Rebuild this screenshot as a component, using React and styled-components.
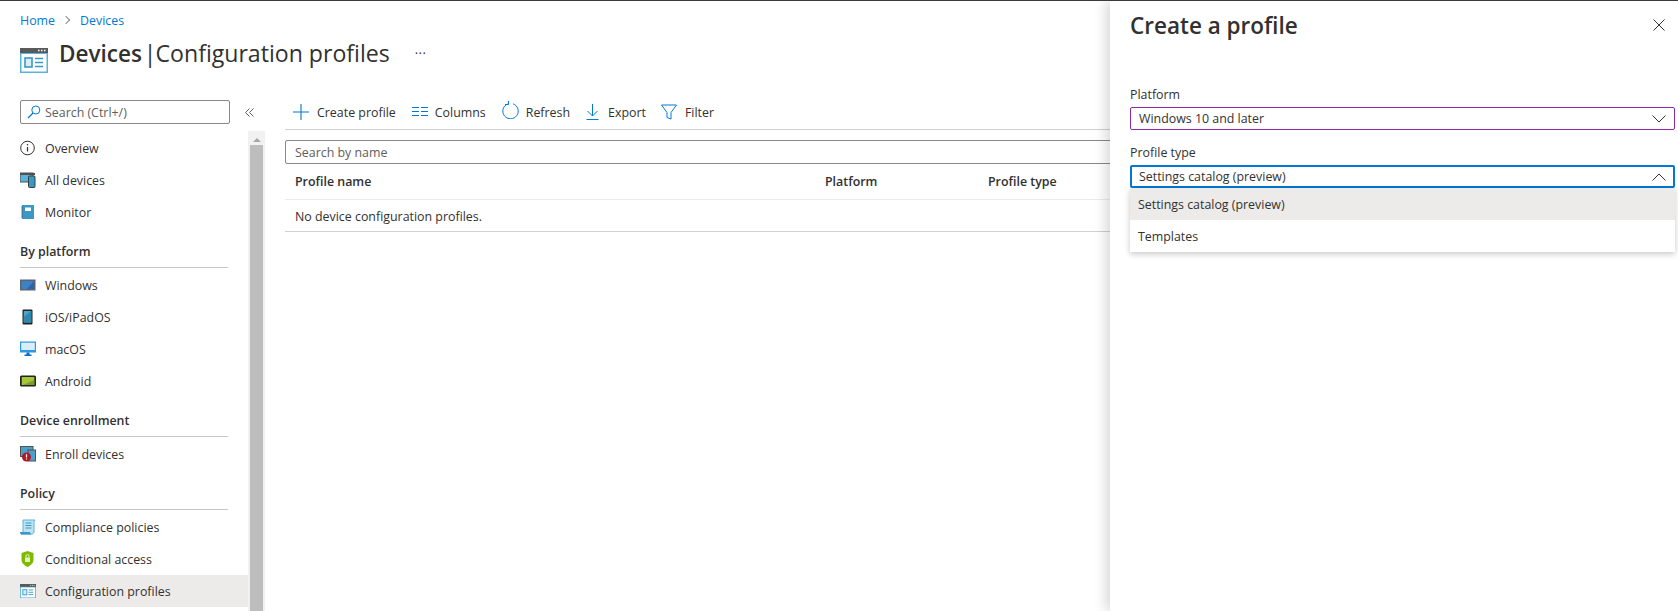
import React from "react";
import styled, { createGlobalStyle } from "styled-components";

const Global = createGlobalStyle`
  html, body { margin: 0; padding: 0; background: #fff; }
  body { font-family: "Open Sans", "Noto Sans", "Liberation Sans", sans-serif; font-size: 12.4px; color: #323130; }
  * { box-sizing: border-box; }
`;

const ProfileIcon = ({ size = 28 }) => (
  <svg width={size} height={size * 25 / 28} viewBox="0 0 28 25">
    <rect x="0" y="0" width="28" height="25" fill="#59b4d9" />
    <rect x="0" y="0" width="28" height="5" fill="#5a5a5a" />
    <rect x="1.5" y="6" width="25" height="17.5" fill="#fff" />
    <rect x="5" y="10" width="7" height="9" fill="#d7eef7" stroke="#3999c6" strokeWidth="1.6" />
    <path d="M15 10.5h8M15 14.5h8M15 18.5h8" stroke="#3999c6" strokeWidth="1.6" />
    <path d="M18 2.5h1.5M21 2.5h1.5M24 2.5h1.5" stroke="#fff" strokeWidth="1.4" />
  </svg>
);

const InfoIcon = () => (
  <svg width="16" height="16" viewBox="0 0 16 16" fill="none">
    <circle cx="7.5" cy="8" r="6.8" stroke="#323130" strokeWidth="1" />
    <path d="M7.5 7v4.5" stroke="#323130" strokeWidth="1.2" />
    <circle cx="7.5" cy="4.8" r=".8" fill="#323130" />
  </svg>
);

const AllDevicesIcon = () => (
  <svg width="16" height="16" viewBox="0 0 16 16">
    <rect x="0" y="1" width="13" height="9" fill="#59b4d9" stroke="#505050" strokeWidth="1" />
    <path d="M0 1h15v2H0z" fill="#505050" />
    <rect x="8.5" y="4" width="6.5" height="11.5" rx="1" fill="#3999c6" stroke="#3c3c3c" strokeWidth="1" />
  </svg>
);

const MonitorIcon = () => (
  <svg width="16" height="16" viewBox="0 0 16 16">
    <rect x="2" y="1" width="12" height="14" fill="#3999c6" />
    <rect x="5" y="3.5" width="6" height="3.5" fill="#fff" />
    <path d="M1 3h2M1 5h2M1 7h2M1 9h2M1 11h2M1 13h2" stroke="#555" strokeWidth=".8" />
  </svg>
);

const WindowsIcon = () => (
  <svg width="16" height="16" viewBox="0 0 16 16">
    <rect x="0" y="2.5" width="15.5" height="11" fill="#5a6472" />
    <rect x="1.5" y="4" width="12.5" height="8" fill="#3e82c4" />
    <path d="M7 12l7-8v8z" fill="#2a66ac" />
  </svg>
);

const TabletIcon = () => (
  <svg width="16" height="16" viewBox="0 0 16 16">
    <rect x="2.500" y="0.500" width="10" height="15" rx="1" fill="#222" />
    <rect x="3.700" y="2" width="7.600" height="11.500" fill="#4aa6cf" />
    <path d="M3.700 13.500V8l7.600-6v11.500z" fill="#3187ad" />
  </svg>
);

const MacIcon = () => (
  <svg width="16" height="16" viewBox="0 0 16 16">
    <rect x="0" y="0.500" width="16" height="11" fill="#2b9ae0" />
    <rect x="1.200" y="1.700" width="13.600" height="7.300" fill="#d9eefa" />
    <path d="M6.500 11.500h3v2h2v1.500h-7v-1.500h2z" fill="#0f6cbd" />
  </svg>
);

const AndroidIcon = () => (
  <svg width="16" height="16" viewBox="0 0 16 16">
    <rect x="0" y="2.500" width="16" height="11" rx="1.500" fill="#222" />
    <rect x="1.700" y="4" width="12.600" height="8" fill="#a4c639" />
    <path d="M3 12l11.300-5v5z" fill="#7f9c2a" />
  </svg>
);

const EnrollIcon = () => (
  <svg width="16" height="16" viewBox="0 0 16 16">
    <rect x="0.500" y="0.500" width="12.500" height="10" fill="#4c9fcb" stroke="#505050" />
    <rect x="8" y="4" width="7.500" height="11" fill="#4c9fcb" stroke="#505050" />
    <circle cx="6.500" cy="11" r="4.500" fill="#ad1a23" />
    <path d="M6.500 8.300v3.200M6.500 12.500v1" stroke="#fff" strokeWidth="1.200" />
  </svg>
);

const ComplianceIcon = () => (
  <svg width="16" height="16" viewBox="0 0 16 16">
    <path d="M3 1h12c-1 1-1 2-1 3v9c0 1-1 2-2 2H1c1 0 2-1 2-2z" fill="#bfe3f2" stroke="#59b4d9" strokeWidth="1" />
    <path d="M5.500 4h6M5.500 6.500h6M5.500 9h6" stroke="#3999c6" strokeWidth="1" />
    <path d="M0 13h10c0 1 .5 2 1.500 2.500H1.500C.5 15.500 0 14 0 13z" fill="#3999c6" />
  </svg>
);

const ShieldIcon = () => (
  <svg width="16" height="16" viewBox="0 0 16 16">
    <path d="M7.500 0l6 2v7c0 3-3 5.500-6 7-3-1.500-6-4-6-7V2z" fill="#7fba00" />
    <rect x="5" y="6.500" width="5" height="4.500" fill="#e4f2c0" />
    <path d="M6 6.500V5a1.500 1.500 0 013 0v1.500" fill="none" stroke="#e4f2c0" strokeWidth="1" />
  </svg>
);

const SearchGlass = () => (
  <svg width="14" height="14" viewBox="0 0 14 14" fill="none" stroke="#0078d4" strokeWidth="1">
    <circle cx="8.800" cy="5" r="4" />
    <path d="M6 8L1 13" strokeWidth="1.300" />
  </svg>
);

const DoubleChevron = () => (
  <svg width="9" height="9" viewBox="0 0 9 9" stroke="#605e5c" strokeWidth="1" fill="none">
    <path d="M4.500.500L.5 4.500l4 4M8.500.500l-4 4 4 4" />
  </svg>
);

const PlusIcon = () => (
  <svg width="16" height="16" viewBox="0 0 16 16" stroke="#0078d4" strokeWidth="1.100" fill="none">
    <path d="M8 0v16M0 8h16" />
  </svg>
);

const ColumnsIcon = () => (
  <svg width="16" height="16" viewBox="0 0 16 16" stroke="#0078d4" strokeWidth="1.200" fill="none">
    <path d="M0 3.500h7M0 7.500h7M0 11.500h7M9 3.500h7M9 7.500h7M9 11.500h7" />
  </svg>
);

const RefreshIcon = () => (
  <svg width="17" height="18" viewBox="0 0 17 18" stroke="#0078d4" strokeWidth="1" fill="none" style={{ marginTop: -4 }}>
    <path d="M5.500 3A7.700 7.700 0 1 0 11 2.800" />
    <path d="M6.500 0v3.500H3" />
  </svg>
);

const ExportIcon = () => (
  <svg width="13" height="16" viewBox="0 0 13 16" stroke="#0078d4" strokeWidth="1" fill="none">
    <path d="M6.500 0v12M1.500 7l5 5 5-5M.5 15.500h12" />
  </svg>
);

const FunnelIcon = () => (
  <svg width="16" height="16" viewBox="0 0 16 16" stroke="#0078d4" strokeWidth="1" fill="none">
    <path d="M.5 1h15L10 8.500v6.500l-4-1.500V8.500z" />
  </svg>
);

const CloseIcon = () => (
  <svg width="12" height="12" viewBox="0 0 12 12" stroke="#323130" strokeWidth="1" fill="none">
    <path d="M.5.500l11 11M11.500.500l-11 11" />
  </svg>
);

const Chevron = ({ up }) => (
  <svg width="14" height="8" viewBox="0 0 14 8" stroke="#323130" strokeWidth="1" fill="none">
    <path d={up ? "M.5 7.500L7 1l6.500 6.500" : "M.5.500L7 7l6.500-6.500"} />
  </svg>
);

const Page = styled.div`
  position: relative;
  height: 611px;
  overflow: hidden;
  border-top: 1px solid #3b3a39;
`;

const Header = styled.header`
  padding: 10px 20px 0;
  height: 87px;
`;

const Crumbs = styled.nav`
  display: flex;
  align-items: center;
  gap: 9px;
  height: 18px;
  color: #0078d4;
`;

const CrumbSep = styled.span`
  width: 6px;
  height: 6px;
  margin: 0 2px 0 -1px;
  border-top: 1px solid #8a8886;
  border-right: 1px solid #8a8886;
  transform: rotate(45deg);
`;

const TitleRow = styled.div`
  display: flex;
  align-items: flex-start;
  margin-top: 9px;
`;

const IconSlot = styled.div`
  width: 39px;
  padding-top: 10px;
  flex: none;
`;

const Title = styled.h1`
  margin: 0;
  font-size: 23.100px;
  line-height: 30px;
  font-weight: 400;
  white-space: nowrap;
  b { font-weight: 600; font-size: 22.500px; }
`;

const Pipe = styled.span`
  margin: 0 -1px 0 2px;
`;

const More = styled.span`
  margin-left: 25px;
  font-size: 13px;
  line-height: 30px;
  letter-spacing: .5px;
`;

const Body = styled.div`
  display: flex;
  align-items: flex-start;
`;

const Side = styled.aside`
  width: 285px;
  flex: none;
  padding-top: 12px;
`;

const SideTop = styled.div`
  display: flex;
  align-items: center;
  padding-left: 20px;
  height: 24px;
`;

const SideSearch = styled.div`
  width: 210px;
  height: 24px;
  display: flex;
  align-items: center;
  gap: 4px;
  padding-left: 6px;
  border: 1px solid #8a8886;
  border-radius: 2px;
  color: #605e5c;
`;

const Collapse = styled.span`
  display: flex;
  margin-left: 15px;
`;

const SideScroll = styled.div`
  display: flex;
  margin-top: 7px;
  width: 265px;
`;

const NavList = styled.ul`
  list-style: none;
  margin: 0;
  padding: 1px 0 0;
  width: 248px;
  flex: none;
`;

const NavItem = styled.li`
  display: flex;
  align-items: center;
  height: 32px;
  padding-left: 20px;
  gap: 9px;
  white-space: nowrap;
  background: ${(p) => (p.$active ? "#edebe9" : "transparent")};
`;

const NavHead = styled.li`
  height: 40px;
  margin: 0 20px 1px;
  padding-bottom: 5px;
  display: flex;
  align-items: flex-end;
  font-weight: 600;
  line-height: 20px;
  border-bottom: 1px solid #c8c6c4;
`;

const ScrollTrack = styled.div`
  width: 17px;
  flex: none;
  height: 480px;
  padding: 0 2px;
  background: #f1f1f1;
`;

const ScrollArrow = styled.div`
  width: 0;
  margin: 7px auto 3px;
  border: 4px solid transparent;
  border-top: 0;
  border-bottom: 4px solid #a6a6a6;
  height: 0;
`;

const ScrollThumb = styled.div`
  height: 470px;
  background: #bdbdbd;
`;

const Main = styled.main`
  flex: 1;
  min-width: 0;
  padding-top: 7px;
`;

const Toolbar = styled.div`
  display: flex;
  align-items: center;
  height: 35px;
  padding-left: 8px;
  border-bottom: 1px solid #d2d0ce;
`;

const ToolButton = styled.div`
  display: flex;
  align-items: center;
  gap: ${(p) => p.$gap || 8}px;
  margin-right: ${(p) => p.$after || 16}px;
  white-space: nowrap;
`;

const NameSearch = styled.div`
  height: 24px;
  margin-top: 10px;
  width: 900px;
  padding-left: 9px;
  display: flex;
  align-items: center;
  border: 1px solid #8a8886;
  border-radius: 2px;
  color: #605e5c;
`;

const HeadRow = styled.div`
  display: grid;
  grid-template-columns: 530px 163px 1fr;
  align-items: center;
  height: 36px;
  padding-left: 10px;
  font-weight: 600;
  border-bottom: 1px solid #edebe9;
`;

const EmptyRow = styled.div`
  height: 32px;
  padding: 1px 0 0 10px;
  display: flex;
  align-items: center;
  border-bottom: 1px solid #d2d0ce;
`;

const Panel = styled.section`
  position: absolute;
  top: 0;
  right: 0;
  bottom: 0;
  width: 568px;
  padding: 0 3px 0 20px;
  background: #fff;
  box-shadow: -4px 0 12px rgba(0, 0, 0, .16);
`;

const PanelHead = styled.div`
  display: flex;
  align-items: center;
  justify-content: space-between;
  height: 48px;
  padding-right: 10px;
`;

const PanelTitle = styled.h2`
  margin: 0;
  font-size: 22.500px;
  font-weight: 600;
`;

const Label = styled.div`
  height: 18px;
  line-height: 18px;
  margin-bottom: 3px;
  margin-top: ${(p) => p.$top}px;
`;

const SelectBox = styled.div`
  height: 23px;
  display: flex;
  align-items: center;
  justify-content: space-between;
  padding: ${(p) => (p.$focus ? "0 7px 0 7px" : "0 8px 0 8px")};
  border: ${(p) => (p.$focus ? "2px solid #0078d4" : "1px solid #8c2ba3")};
  border-radius: 2px;
`;

const DropWrap = styled.div`
  position: relative;
`;

const Menu = styled.div`
  position: absolute;
  top: 0;
  left: 0;
  right: 0;
  background: #fff;
  box-shadow: 0 2px 6px rgba(0, 0, 0, .22);
`;

const MenuItem = styled.div`
  height: 32px;
  padding-left: 8px;
  display: flex;
  align-items: center;
  background: ${(p) => (p.$on ? "#edebe9" : "#fff")};
`;

const NAV = [
  { label: "Overview", icon: <InfoIcon /> },
  { label: "All devices", icon: <AllDevicesIcon /> },
  { label: "Monitor", icon: <MonitorIcon /> },
  { head: "By platform" },
  { label: "Windows", icon: <WindowsIcon /> },
  { label: "iOS/iPadOS", icon: <TabletIcon /> },
  { label: "macOS", icon: <MacIcon /> },
  { label: "Android", icon: <AndroidIcon /> },
  { head: "Device enrollment" },
  { label: "Enroll devices", icon: <EnrollIcon /> },
  { head: "Policy" },
  { label: "Compliance policies", icon: <ComplianceIcon /> },
  { label: "Conditional access", icon: <ShieldIcon /> },
  { label: "Configuration profiles", icon: <ProfileIcon size={16} />, active: true },
];

export default function App() {
  return (
    <Page>
      <Global />
      <Header>
        <Crumbs>
          <span>Home</span>
          <CrumbSep />
          <span>Devices</span>
        </Crumbs>
        <TitleRow>
          <IconSlot><ProfileIcon /></IconSlot>
          <Title><b>Devices</b><Pipe>|</Pipe>Configuration profiles</Title>
          <More>···</More>
        </TitleRow>
      </Header>
      <Body>
        <Side>
          <SideTop>
            <SideSearch><SearchGlass />Search (Ctrl+/)</SideSearch>
            <Collapse><DoubleChevron /></Collapse>
          </SideTop>
          <SideScroll>
            <NavList>
              {NAV.map((item) =>
                item.head ? (
                  <NavHead key={item.head}>{item.head}</NavHead>
                ) : (
                  <NavItem key={item.label} $active={item.active}>
                    {item.icon}
                    <span>{item.label}</span>
                  </NavItem>
                )
              )}
            </NavList>
            <ScrollTrack>
              <ScrollArrow />
              <ScrollThumb />
            </ScrollTrack>
          </SideScroll>
        </Side>
        <Main>
          <Toolbar>
            <ToolButton $after={16}><PlusIcon />Create profile</ToolButton>
            <ToolButton $gap={7} $after={16}><ColumnsIcon />Columns</ToolButton>
            <ToolButton $gap={7} $after={16}><RefreshIcon />Refresh</ToolButton>
            <ToolButton $gap={9} $after={15}><ExportIcon />Export</ToolButton>
            <ToolButton $gap={8}><FunnelIcon />Filter</ToolButton>
          </Toolbar>
          <NameSearch>Search by name</NameSearch>
          <HeadRow>
            <span>Profile name</span>
            <span>Platform</span>
            <span>Profile type</span>
          </HeadRow>
          <EmptyRow>No device configuration profiles.</EmptyRow>
        </Main>
      </Body>
      <Panel>
        <PanelHead>
          <PanelTitle>Create a profile</PanelTitle>
          <CloseIcon />
        </PanelHead>
        <Label $top={37}>Platform</Label>
        <SelectBox>
          <span>Windows 10 and later</span>
          <Chevron />
        </SelectBox>
        <Label $top={14}>Profile type</Label>
        <SelectBox $focus>
          <span>Settings catalog (preview)</span>
          <Chevron up />
        </SelectBox>
        <DropWrap>
          <Menu>
            <MenuItem $on>Settings catalog (preview)</MenuItem>
            <MenuItem>Templates</MenuItem>
          </Menu>
        </DropWrap>
      </Panel>
    </Page>
  );
}
